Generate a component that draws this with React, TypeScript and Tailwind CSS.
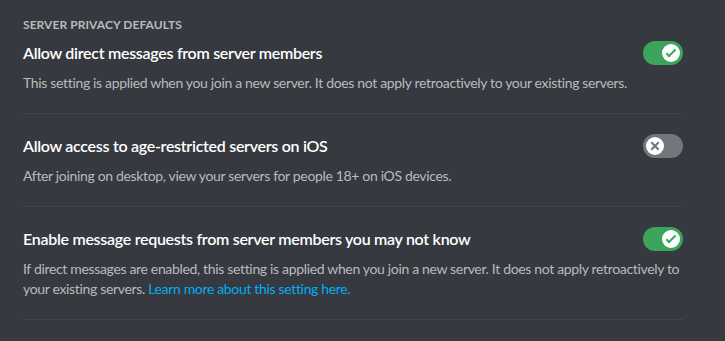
export default function App() {
  const items = [
    {
      title: "Allow direct messages from server members",
      desc: "This setting is applied when you join a new server. It does not apply retroactively to your existing servers.",
      on: true,
    },
    {
      title: "Allow access to age-restricted servers on iOS",
      desc: "After joining on desktop, view your servers for people 18+ on iOS devices.",
      on: false,
    },
    {
      title: "Enable message requests from server members you may not know",
      desc: "If direct messages are enabled, this setting is applied when you join a new server. It does not apply retroactively to your existing servers.",
      link: "Learn more about this setting here.",
      on: true,
    },
  ];

  return (
    <div
      className="min-h-[341px] w-[725px] bg-[#36393f] pt-[17px] pl-[23px]"
      style={{ fontFamily: '"Lato", "Noto Sans", sans-serif' }}
    >
      <div className="w-[660px]">
        <h5 className="mb-2 text-[12px] font-bold uppercase leading-4 tracking-[0.005em] text-[#b9bbbe]">
          Server Privacy Defaults
        </h5>

        {items.map((item) => (
          <div key={item.title} className="mb-5 border-b border-[#42454a] pb-5">
            <div className="flex items-center justify-between">
              <div className="text-[16px] font-semibold leading-6 tracking-[-0.018em] text-white">
                {item.title}
              </div>
              <Toggle on={item.on} />
            </div>
            <p className="mt-2 text-[14px] leading-5 tracking-[-0.024em] text-[#b9bbbe]">
              {item.desc}
              {item.link && (
                <>
                  {" "}
                  <a className="text-[#00aff4]">{item.link}</a>
                </>
              )}
            </p>
          </div>
        ))}
      </div>
    </div>
  );
}

function Toggle({ on }: { on: boolean }) {
  return (
    <div
      className={`flex h-6 w-10 shrink-0 items-center rounded-full px-[3px] ${
        on ? "justify-end bg-[#3ba55c]" : "justify-start bg-[#72767d]"
      }`}
    >
      <div className="flex h-[18px] w-[18px] items-center justify-center rounded-full bg-white">
        <svg viewBox="0 0 20 20" width="18" height="18">
          {on ? (
            <>
              <path fill="#3ba55c" d="M7.89561 14.8538L6.30462 13.2629L14.3099 5.25755L15.9009 6.84854L7.89561 14.8538Z" />
              <path fill="#3ba55c" d="M4.08643 11.0903L5.67742 9.49929L9.4485 13.2704L7.85751 14.8614L4.08643 11.0903Z" />
            </>
          ) : (
            <>
              <path fill="#72767d" d="M5.13231 6.72963L6.7233 5.13864L14.855 13.2704L13.264 14.8614L5.13231 6.72963Z" />
              <path fill="#72767d" d="M13.2704 5.13864L14.8614 6.72963L6.72963 14.8614L5.13864 13.2704L13.2704 5.13864Z" />
            </>
          )}
        </svg>
      </div>
    </div>
  );
}
